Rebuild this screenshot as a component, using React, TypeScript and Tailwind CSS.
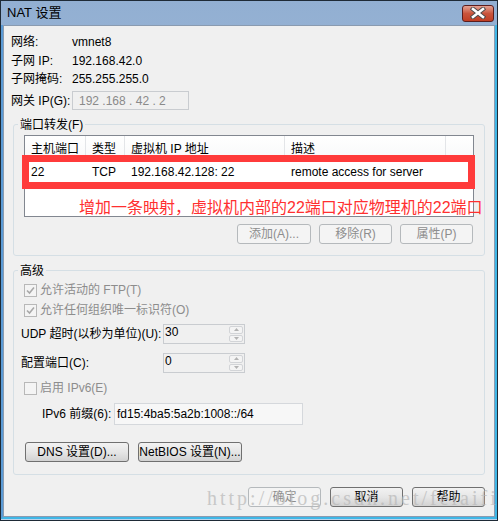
import { ReactNode } from "react";

const FONT = '"Liberation Sans", "Noto Sans CJK SC", sans-serif';

function WinButton({ children, disabled, className = "" }: { children: ReactNode; disabled?: boolean; className?: string }) {
  return (
    <div
      className={
        "flex h-[20px] items-center justify-center rounded-[3px] border text-[12px] " +
        (disabled
          ? "border-[#b5b9bc] bg-[#f4f4f4] text-[#8d8d8d] "
          : "border-[#707070] bg-gradient-to-b from-[#f2f2f2] via-[#e6e6e6] to-[#d2d2d2] text-black ") +
        className
      }
    >
      {children}
    </div>
  );
}

function Check({ checked }: { checked?: boolean }) {
  return (
    <div className="flex h-[13px] w-[13px] items-center justify-center border border-[#b8b8b8] bg-[#f4f4f4]">
      {checked && (
        <svg width="9" height="9" viewBox="0 0 9 9">
          <path d="M1 4.5 L3.5 7 L8 1.5" fill="none" stroke="#a8a8a8" strokeWidth="1.6" />
        </svg>
      )}
    </div>
  );
}

function SpinBox({ value }: { value: string }) {
  return (
    <div className="flex h-[20px] w-[82px] border border-[#c9ccd0] bg-[#f0f0f0]">
      <div className="flex-1 pl-[1px] text-[12px] leading-[14px] text-black">{value}</div>
      <div className="flex w-[16px] flex-col gap-px p-px">
        {["M1 4 L3.5 1 L6 4", "M1 1 L3.5 4 L6 1"].map((d) => (
          <div key={d} className="flex flex-1 items-center justify-center rounded-[2px] border border-[#d2d4d7] bg-[#f4f4f4]">
            <svg width="7" height="5" viewBox="0 0 7 5">
              <path d={d} fill="#b3b3b3" />
            </svg>
          </div>
        ))}
      </div>
    </div>
  );
}

function Legend({ children }: { children: ReactNode }) {
  return <div className="-mt-[7px] ml-[-6px] w-fit bg-[#f0f0f0] px-[2px] text-[12px] leading-[14px]">{children}</div>;
}

const cols = [
  { w: "w-[61px]", head: "主机端口", val: "22" },
  { w: "w-[39px]", head: "类型", val: "TCP" },
  { w: "w-[160px]", head: "虚拟机 IP 地址", val: "192.168.42.128: 22" },
  { w: "w-[161px]", head: "描述", val: "remote access for server" },
];

export default function App() {
  return (
    <div className="relative h-[521px] w-[498px] overflow-hidden bg-[#1e2a36] p-px text-black" style={{ fontFamily: FONT }}>
      <div className="flex h-full flex-col bg-gradient-to-b from-[#92afd2] to-[#bdd2ea]">
        {/* title bar */}
        <div className="flex h-[24px] items-center justify-between pl-[6px] pr-[3px]">
          <span className="text-[13px] text-black">NAT 设置</span>
          <div className="flex h-[17px] w-[32px] items-center justify-center rounded-[3px] border border-[#5b1d1d] bg-gradient-to-b from-[#e3a293] via-[#c9543c] to-[#c03d22]">
            <svg width="16" height="12" viewBox="0 0 16 12">
              <path d="M3 2 L13 10 M13 2 L3 10" stroke="#4a4a4a" strokeWidth="4.4" strokeLinecap="square" />
              <path d="M3 2 L13 10 M13 2 L3 10" stroke="#ffffff" strokeWidth="2.6" strokeLinecap="square" />
            </svg>
          </div>
        </div>

        {/* client area */}
        <div className="mb-px flex flex-1 flex-col border-b-2 border-l-2 border-r-2 border-b-[#3fb6e6] border-l-[#5b9bd6] border-r-[#3fb6e6]">
          <div className="flex flex-1 flex-col border border-[#8a9bb0] bg-[#f0f0f0] text-[12px]">
            {/* info rows */}
            <div className="flex flex-col pl-[7px] pt-[7px]">
              <div className="flex h-[18px] items-center">
                <span className="w-[61px]">网络:</span>
                <span>vmnet8</span>
              </div>
              <div className="flex h-[19px] items-center">
                <span className="w-[61px]">子网 IP:</span>
                <span>192.168.42.0</span>
              </div>
              <div className="flex h-[18px] items-center">
                <span className="w-[61px]">子网掩码:</span>
                <span>255.255.255.0</span>
              </div>
              <div className="mt-[3px] flex h-[19px] items-center">
                <span className="w-[61px]">网关 IP(G):</span>
                <div className="flex h-[19px] w-[117px] items-center border border-[#c9ccd0] bg-[#f0f0f0] pl-[6px] text-[#8a8a8a]">
                  192 .168 . 42 . 2
                </div>
              </div>
            </div>

            {/* port forwarding group */}
            <div className="mx-[9px] mt-[14px] rounded-[3px] border border-[#d5dfe5] px-[10px] pb-[11px]">
              <Legend>端口转发(F)</Legend>
              <div className="mt-[3px] h-[82px] border border-[#828790] bg-white">
                <div className="flex h-[26px] bg-gradient-to-b from-white to-[#f7f8f9]">
                  {cols.map((c) => (
                    <div key={c.head} className={c.w + " flex items-center border-r border-[#e3e5e8] pl-[6px]"}>
                      {c.head}
                    </div>
                  ))}
                </div>
                <div className="flex h-[19px]">
                  {cols.map((c) => (
                    <div key={c.head} className={c.w + " flex items-center whitespace-nowrap pl-[6px]"}>
                      {c.val}
                    </div>
                  ))}
                </div>
              </div>
              <div className="mt-[7px] flex justify-end gap-[8px] pr-[1px]">
                <WinButton disabled className="w-[74px]">添加(A)...</WinButton>
                <WinButton disabled className="w-[73px]">移除(R)</WinButton>
                <WinButton disabled className="w-[73px]">属性(P)</WinButton>
              </div>
            </div>

            {/* advanced group */}
            <div className="mx-[9px] mt-[14px] rounded-[3px] border border-[#d5dfe5] px-[10px] pb-[12px]">
              <Legend>高级</Legend>
              <div className="mt-[2px] flex h-[20px] items-center gap-[3px] text-[#8d8d8d]">
                <Check checked />
                <span>允许活动的 FTP(T)</span>
              </div>
              <div className="flex h-[20px] items-center gap-[3px] text-[#8d8d8d]">
                <Check checked />
                <span>允许任何组织唯一标识符(O)</span>
              </div>
              <div className="mt-[4px] flex h-[20px] items-center">
                <span className="ml-[-3px] w-[142px]">UDP 超时(以秒为单位)(U):</span>
                <SpinBox value="30" />
              </div>
              <div className="mt-[9px] flex h-[20px] items-center">
                <span className="ml-[-3px] w-[142px]">配置端口(C):</span>
                <SpinBox value="0" />
              </div>
              <div className="mt-[5px] flex h-[20px] items-center gap-[3px] text-[#8d8d8d]">
                <Check />
                <span>启用 IPv6(E)</span>
              </div>
              <div className="mt-[5px] flex h-[22px] items-center">
                <span className="ml-[18px] w-[72px]">IPv6 前缀(6):</span>
                <div className="flex h-[22px] w-[189px] items-center border border-[#d5d8dc] bg-[#f7f7f7] pl-[2px]">
                  fd15:4ba5:5a2b:1008::/64
                </div>
              </div>
              <div className="mt-[17px] flex gap-[9px] pl-[1px]">
                <WinButton className="w-[104px]">DNS 设置(D)...</WinButton>
                <WinButton className="w-[104px]">NetBIOS 设置(N)...</WinButton>
              </div>
            </div>

            {/* dialog buttons */}
            <div className="mr-[9px] mt-[12px] flex justify-end gap-[9px]">
              <WinButton disabled className="w-[73px]">确定</WinButton>
              <WinButton className="w-[73px]">取消</WinButton>
              <WinButton className="w-[73px]">帮助</WinButton>
            </div>
          </div>
        </div>
      </div>

      {/* red annotation drawn over the screenshot */}
      <div className="pointer-events-none absolute left-[22px] top-[155px] h-[34px] w-[453px] border-[7px] border-[#ff3b3b]" />
      <div className="pointer-events-none absolute left-[79px] top-[198px] whitespace-nowrap text-[16px] leading-[20px] text-[#ff3030]">
        增加一条映射，虚拟机内部的22端口对应物理机的22端口
      </div>

      {/* blog watermark */}
      <div
        className="pointer-events-none absolute left-[207px] top-[486px] whitespace-nowrap text-[20px] leading-[24px] tracking-[3px] text-[#b8b8b8] opacity-70"
        style={{ fontFamily: '"Liberation Serif", serif' }}
      >
        http://blog.csdn.net/feiaifi
      </div>
    </div>
  );
}
